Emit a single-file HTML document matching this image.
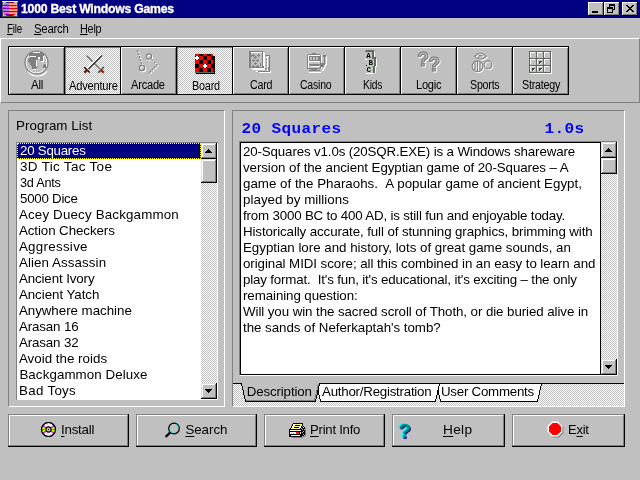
<!DOCTYPE html>
<html lang="en">
<head>
<meta charset="utf-8">
<title>1000 Best Windows Games</title>
<style>
html,body{margin:0;padding:0;}
html{background:#c0c0c0;}
body{width:640px;height:480px;overflow:hidden;background:#c0c0c0;position:relative;
 font-family:"Liberation Sans",sans-serif;font-size:13.33px;line-height:16px;color:#000;will-change:transform;}
*{box-sizing:border-box;}
.abs{position:absolute;}
.t{white-space:nowrap;line-height:16px;}
.dither,.tb.down{background:repeating-conic-gradient(#ffffff 0 25%,#c0c0c0 0 50%) 0 0/2px 2px;}
u{text-decoration:underline;text-decoration-thickness:1px;text-underline-offset:0.5px;text-decoration-skip-ink:none;}
/* title bar */
#title{left:0;top:0;width:640px;height:18px;background:#000080;}
.ttl{color:#fff;font-weight:bold;font-size:13px;-webkit-text-stroke:0.35px #fff;}
.tbtn{top:2px;width:16px;height:14px;background:#c0c0c0;
 box-shadow:inset -1px -1px 0 #000,inset 1px 1px 0 #fff,inset -2px -2px 0 #808080;}
/* menu */
.m{font-size:12px;}
.m u{padding-bottom:0;}
/* toolbar */
#tool{left:0;top:38px;width:640px;height:65px;border-top:1px solid #fff;border-left:1px solid #fff;
 border-right:1px solid #808080;border-bottom:1px solid #808080;}
.tb{top:46px;width:57px;height:49px;border:1px solid #000;background:#c0c0c0;
 box-shadow:inset 1px 1px 0 #fff,inset -1px -1px 0 #808080;}
.tb.down{box-shadow:inset 1px 1px 0 #808080;}
.tb .lbl{position:absolute;white-space:nowrap;font-size:12px;line-height:16px;}
.tb svg{position:absolute;}
/* panels */
.sunk{border-top:1px solid #808080;border-left:1px solid #808080;border-right:1px solid #fff;border-bottom:1px solid #fff;}
/* list */
#list{left:16px;top:142px;width:202px;height:258px;background:#fff;overflow:hidden;font-size:13.33px;border-left:1px solid #808080;border-top:1px solid #808080;padding-right:17px;}
#list div{height:16px;padding-left:2.6px;white-space:nowrap;}
#list div.sel{background:#000080;color:#fff;outline:1px dotted #ffff00;outline-offset:-1px;}
/* scrollbars */
.sb{width:16px;}
.sbtn{left:0;width:16px;height:16px;background:#c0c0c0;
 box-shadow:inset -1px -1px 0 #000,inset 1px 1px 0 #dfdfdf,inset -2px -2px 0 #808080,inset 2px 2px 0 #fff;}
/* memo */
#memo{left:239px;top:141px;width:379px;height:235px;border-top:1px solid #808080;border-left:1px solid #808080;border-right:1px solid #fff;border-bottom:1px solid #fff;}
#memoin{left:0;top:0;width:377px;height:233px;border:1px solid #000;background:#fff;}
#memotxt{left:243px;top:144px;width:358px;white-space:nowrap;}
#memotxt div{height:16px;}
.hdr{font-family:"Liberation Mono",monospace;font-weight:bold;font-size:16px;letter-spacing:0.4px;color:#0000ff;line-height:18px;white-space:nowrap;transform:scaleY(0.88);transform-origin:0 0;}
/* bottom buttons */
.bb{top:414px;height:33px;background:#c0c0c0;
 box-shadow:inset -1px -1px 0 #000,inset 1px 1px 0 #808080,inset -2px -2px 0 #808080,inset 2px 2px 0 #fff;}
.bb svg{position:absolute;left:0;top:0;}
.bb u{text-underline-offset:1.5px;}
</style>
</head>
<body>
<!-- TITLE BAR -->
<div id="title" class="abs">
 <svg class="abs" style="left:2px;top:1px" width="16" height="16" viewBox="0 0 16 16" shape-rendering="crispEdges">
  <rect width="16" height="16" fill="#c0c0c0"/>
  <path d="M0 0H16V1H0Z" fill="#f0f0f0"/><path d="M0 1H1V16H0ZM15 1H16V16H15ZM0 15H16V16H0Z" fill="#484838"/>
  <clipPath id="sph"><circle cx="7.9" cy="7.9" r="7.6"/></clipPath>
  <g clip-path="url(#sph)" shape-rendering="auto"><rect x="0" y="1" width="7" height="1" fill="#202080"/><rect x="0" y="2" width="7" height="1" fill="#f060f0"/><rect x="0" y="3" width="7" height="1" fill="#8080c0"/><rect x="0" y="4" width="7" height="1" fill="#8000c0"/><rect x="0" y="5" width="7" height="1" fill="#f060f0"/><rect x="0" y="6" width="7" height="1" fill="#8080c0"/><rect x="0" y="7" width="7" height="1" fill="#8000c0"/><rect x="0" y="8" width="7" height="1" fill="#f060f0"/><rect x="0" y="9" width="7" height="1" fill="#8080c0"/><rect x="0" y="10" width="7" height="1" fill="#8000c0"/><rect x="0" y="11" width="7" height="1" fill="#f060f0"/><rect x="0" y="12" width="7" height="1" fill="#8080c0"/><rect x="0" y="13" width="7" height="1" fill="#8000c0"/><rect x="0" y="14" width="7" height="1" fill="#202080"/><rect x="7" y="1" width="9" height="1" fill="#900000"/><rect x="7" y="2" width="9" height="1" fill="#ff8878"/><rect x="7" y="3" width="9" height="1" fill="#ffa090"/><rect x="7" y="4" width="9" height="1" fill="#e00000"/><rect x="7" y="5" width="9" height="1" fill="#ff8878"/><rect x="7" y="6" width="9" height="1" fill="#ffa090"/><rect x="7" y="7" width="9" height="1" fill="#e00000"/><rect x="7" y="8" width="9" height="1" fill="#ff8878"/><rect x="7" y="9" width="9" height="1" fill="#ffa090"/><rect x="7" y="10" width="9" height="1" fill="#e00000"/><rect x="7" y="11" width="9" height="1" fill="#ff8878"/><rect x="7" y="12" width="9" height="1" fill="#ffa090"/><rect x="7" y="13" width="9" height="1" fill="#e00000"/><rect x="7" y="14" width="9" height="1" fill="#900000"/></g>
 </svg>
 <!--TITLETXT-->
<span class="abs t ttl" style="left:20.5px;top:1px;letter-spacing:-0.25px;transform:scaleX(0.9409);transform-origin:0 0;">1000 Best Windows Games</span>
<!--/TITLETXT-->
 <div class="abs tbtn" style="left:588px"><div class="abs" style="left:4px;top:9px;width:6px;height:2px;background:#000"></div></div>
 <div class="abs tbtn" style="left:604px">
  <svg class="abs" style="left:0;top:0" width="16" height="14" shape-rendering="crispEdges">
   <path d="M5 2h6v2h-6zM5 4h1v1h-1zM10 4h1v4h-2v-1h1z" fill="#000"/>
   <path d="M3 5h6v2h-6zM3 7h1v4h-1zM8 7h1v4h-1zM3 10h6v1h-6z" fill="#000"/>
  </svg>
 </div>
 <div class="abs tbtn" style="left:622px">
  <svg class="abs" style="left:0;top:0" width="16" height="14" shape-rendering="crispEdges">
   <path d="M4 3h2v1h1v1h2v-1h1v-1h2v1h-1v1h-1v1h-1v1h1v1h1v1h1v1h-2v-1h-1v-1h-2v1h-1v1h-2v-1h1v-1h1v-1h1v-1h-1v-1h-1v-1h-1z" fill="#000"/>
  </svg>
 </div>
</div>
<!-- MENU -->
<!--MENU-->
<span class="abs t m" style="left:6.5px;top:21px;letter-spacing:-0.25px;transform:scaleX(0.8196);transform-origin:0 0;"><u>F</u>ile</span><span class="abs t m" style="left:34px;top:21px;letter-spacing:-0.25px;transform:scaleX(0.9474);transform-origin:0 0;"><u>S</u>earch</span><span class="abs t m" style="left:80px;top:21px;letter-spacing:-0.25px;transform:scaleX(0.9029);transform-origin:0 0;"><u>H</u>elp</span>
<!--/MENU-->
<!-- TOOLBAR -->
<div id="tool" class="abs"></div>
<!--TBBUTTONS-->
<div class="abs tb" style="left:8px"><svg width="57" height="49" viewBox="8 46 57 49" style="left:-1px;top:-1px"><g shape-rendering="auto" fill="none"><path d="M27.5 70.5A12 12 0 0 0 46.5 70.5" stroke="#fff" stroke-width="1.1" transform="translate(0.6,0.9)"/><circle cx="36.5" cy="62.5" r="10.5" stroke="#fff" stroke-width="1"/><circle cx="36.5" cy="62.5" r="11.5" stroke="#808080" stroke-width="1.25"/></g><g shape-rendering="crispEdges"><path d="M30 52h3v1h-3zM40 52h3v1h-3zM29 53h15v3h-15zM36 56h8v1h-8zM36 57h2v3h-2zM40 57h3v4h-3z" fill="#808080"/><path d="M30 57h6v1h-6zM29 58h7v1h-7zM28 59h8v3h-8zM29 62h7v1h-7zM30 63h6v2h-6zM31 65h5v1h-5zM32 66h4v3h-4z" fill="#808080"/><path d="M43 65h3v3h-3zM44 64h2v1h-2z" fill="#808080"/><path d="M33 52h7v1h-7zM30 56h6v1h-6zM36 60h1v6h-1zM33 69h3v1h-3zM43 56h1v6h-1zM41 61h2v1h-2zM38 57h2v2h-2z" fill="#fff"/><path d="M37 66h1v1h-1zM36 67h1v1h-1z" fill="#909000"/></g></svg><span class="lbl" style="left:21.9px;top:30px;letter-spacing:-0.25px;transform:scaleX(0.9696);transform-origin:0 0">All</span></div>
<div class="abs tb down" style="left:64px"><svg width="57" height="49" viewBox="64 46 57 49" style="left:-1px;top:-1px"><g shape-rendering="auto" stroke-linecap="butt"><line x1="87.4" y1="54.9" x2="100.9" y2="68.4" stroke="#e4e8e4" stroke-width="2"/><line x1="86.6" y1="55.5" x2="100.2" y2="69.1" stroke="#586858" stroke-width="1.2"/><line x1="101.1" y1="54.8" x2="87.5" y2="68.4" stroke="#f4f4f4" stroke-width="2.2"/><line x1="102.1" y1="55.4" x2="88.4" y2="69.1" stroke="#101010" stroke-width="1.2"/><line x1="84.2" y1="67.2" x2="89.8" y2="72.6" stroke="#101010" stroke-width="1.4"/><line x1="103.9" y1="67" x2="98.2" y2="72.7" stroke="#303830" stroke-width="1.4"/><line x1="87.7" y1="69.5" x2="84.3" y2="72.6" stroke="#802000" stroke-width="2.4"/><line x1="100.9" y1="70" x2="103.8" y2="72.6" stroke="#a82000" stroke-width="2.4"/></g></svg><span class="lbl" style="left:4px;top:31px;letter-spacing:-0.25px;transform:scaleX(0.9297);transform-origin:0 0">Adventure</span></div>
<div class="abs tb" style="left:120px"><svg width="57" height="49" viewBox="120 46 57 49" style="left:-1px;top:-1px"><g transform="translate(1,1)"><g shape-rendering="auto" fill="none" stroke="#ffffff"><line x1="137.3" y1="50.2" x2="142" y2="65" stroke-width="1.4" stroke-dasharray="2 1.2"/><circle cx="149" cy="56.5" r="2.6" stroke-width="1.3"/><circle cx="142" cy="68" r="2.6" stroke-width="1.3"/><polyline points="151.5,59.5 157,65 148,74" stroke-width="1.4" stroke-dasharray="2 1.3"/></g></g><g shape-rendering="auto" fill="none" stroke="#808080"><line x1="137.3" y1="50.2" x2="142" y2="65" stroke-width="1.4" stroke-dasharray="2 1.2"/><circle cx="149" cy="56.5" r="2.6" stroke-width="1.3"/><circle cx="142" cy="68" r="2.6" stroke-width="1.3"/><polyline points="151.5,59.5 157,65 148,74" stroke-width="1.4" stroke-dasharray="2 1.3"/></g></svg><span class="lbl" style="left:10px;top:30px;letter-spacing:-0.25px;transform:scaleX(0.9246);transform-origin:0 0">Arcade</span></div>
<div class="abs tb down" style="left:176px"><svg width="57" height="49" viewBox="176 46 57 49" style="left:-1px;top:-1px"><g shape-rendering="crispEdges"><rect x="196" y="56" width="19" height="18" fill="#000"/><rect x="195" y="72" width="19" height="1" fill="#606860"/><rect x="195" y="54" width="18" height="18" fill="#000"/><rect x="195" y="54" width="4" height="2" fill="#ff0000"/><rect x="203" y="54" width="4" height="2" fill="#ff0000"/><rect x="211" y="54" width="2" height="2" fill="#ff0000"/><rect x="199" y="56" width="4" height="4" fill="#ff0000"/><rect x="207" y="56" width="4" height="4" fill="#ff0000"/><rect x="195" y="60" width="4" height="4" fill="#ff0000"/><rect x="203" y="60" width="4" height="4" fill="#ff0000"/><rect x="211" y="60" width="2" height="4" fill="#ff0000"/><rect x="199" y="64" width="4" height="4" fill="#ff0000"/><rect x="207" y="64" width="4" height="4" fill="#ff0000"/><rect x="195" y="68" width="4" height="4" fill="#ff0000"/><rect x="203" y="68" width="4" height="4" fill="#ff0000"/><rect x="211" y="68" width="2" height="4" fill="#ff0000"/><path d="M196 56h2v1h1v2h-1v1h-2v-1h-1v-2h1z" fill="#fff"/><path d="M204 64h2v1h1v2h-1v1h-2v-1h-1v-2h1z" fill="#fff"/></g></svg><span class="lbl" style="left:14.9px;top:31px;letter-spacing:-0.25px;transform:scaleX(0.9062);transform-origin:0 0">Board</span></div>
<div class="abs tb" style="left:232px"><svg width="57" height="49" viewBox="232 46 57 49" style="left:-1px;top:-1px"><g shape-rendering="crispEdges"><path d="M263 53h2v17h-12v-1h11v-15h-1z" fill="#fff"/><path d="M266 55h2v17h-12v-1h11v-15h-1z" fill="#fff"/><path d="M262 52h2v17h-13v-1h12v-15h-1z" fill="#fff"/><path d="M268 56h2v15h1v2h-12v-1h10v-15h-1z" fill="#fff"/><path d="M265 55h5v1h-5zM269 56h1v15h-1zM258 71h12v1h-12z" fill="#808080"/><path d="M266 57h2v1h-2z" fill="#fff"/><path d="M266 59h1v1h-1zM266 62h1v1h-1zM266 65h1v1h-1zM266 68h1v1h-1zM268 67h1v3h-1z" fill="#808080"/><path d="M263 66h1v2h-1zM265 68h1v2h-1z" fill="#808080"/><rect x="249.5" y="51.5" width="13" height="16" fill="#c0c0c0" stroke="#808080" stroke-width="1"/><path d="M251 52h11v1h-11z" fill="#fff"/><path d="M250 52h1v15h-1z" fill="#808080"/></g><g fill="#808080" shape-rendering="crispEdges"><path d="M253 54h1v1h1v1h-1v1h-1v-1h-1v-1h1z"/><path d="M258 54h1v1h1v1h-1v1h-1v-1h-1v-1h1z"/><path d="M255 56h1v1h1v1h-1v1h-1v-1h-1v-1h1z"/><path d="M253 59h1v1h1v1h-1v1h-1v-1h-1v-1h1z"/><path d="M257 59h1v1h1v1h-1v1h-1v-1h-1v-1h1z"/><path d="M255 62h1v1h1v1h-1v1h-1v-1h-1v-1h1z"/><path d="M253 65h1v1h1v1h-1v1h-1v-1h-1v-1h1z"/><path d="M257 65h1v1h1v1h-1v1h-1v-1h-1v-1h1z"/><path d="M251 55h1v2h-1zM260 63h1v3h-1z"/></g></svg><span class="lbl" style="left:16.7px;top:30px;letter-spacing:-0.25px;transform:scaleX(0.8908);transform-origin:0 0">Card</span></div>
<div class="abs tb" style="left:288px"><svg width="57" height="49" viewBox="288 46 57 49" style="left:-1px;top:-1px"><g shape-rendering="crispEdges"><path d="M321 55h1v14h-1zM309 72h12v1h-12zM326 56h1v9h-1v2h-1v2h-1v2h-2v-1h1v-2h1v-2h1v-2h1z" fill="#fff"/><path d="M312 53h4v1h-4zM308 54h12v1h-12zM307 55h1v14h-1zM320 55h1v14h-1zM308 68h12v1h-12zM309 70h11v1h-11zM311 69h6v1h-6z" fill="#808080"/><path d="M308 55h12v1h-12zM308 56h1v12h-1z" fill="#fff"/><path d="M309 56h11v5h-11z" fill="#808080"/><path d="M310 57h2v3h-2zM313 57h2v3h-2zM316 57h2v3h-2z" fill="#c0c0c0"/><path d="M309 61h11v1h-11z" fill="#fff"/><path d="M309 64h11v1h-11zM310 65h9v1h-9z" fill="#808080"/><path d="M311 66h8v1h-8z" fill="#fff"/><path d="M323 55h3v2h-3zM324 57h1v8h-1zM321 63h3v4h-3z" fill="#808080"/></g></svg><span class="lbl" style="left:11.3px;top:30px;letter-spacing:-0.25px;transform:scaleX(0.8757);transform-origin:0 0">Casino</span></div>
<div class="abs tb" style="left:344px"><svg width="57" height="49" viewBox="344 46 57 49" style="left:-1px;top:-1px"><g shape-rendering="crispEdges"><path d="M374 52h1v7h-1zM376 59h1v8h-1zM375 66h1v7h-1zM366 73h8v1h-8zM365 59h2v1h-2z" fill="#fff"/><path d="M366 50h8v1h-8zM365 51h8v1h-8z" fill="#606860"/><path d="M372 51h2v8h-2z" fill="#606860"/><rect x="365" y="52" width="7" height="7" fill="#c0c8c0"/><path d="M373 57h3v1h-3zM372 58h3v1h-3zM374 58h2v8h-2z" fill="#606860"/><rect x="367" y="59" width="7" height="7" fill="#c0c8c0"/><path d="M373 66h2v7h-2z" fill="#606860"/><rect x="366" y="66" width="7" height="7" fill="#c0c8c0"/><path d="M366 65h1v1h-1z" fill="#000"/></g><g font-family="'Liberation Mono',monospace" font-weight="bold" font-size="7.5px" fill="#000"><text x="366.2" y="58">A</text><text x="368.4" y="65">B</text><text x="366.6" y="72">C</text></g></svg><span class="lbl" style="left:17.8px;top:30px;letter-spacing:-0.25px;transform:scaleX(0.8586);transform-origin:0 0">Kids</span></div>
<div class="abs tb" style="left:400px"><svg width="57" height="49" viewBox="400 46 57 49" style="left:-1px;top:-1px"><g font-family="'Liberation Sans',sans-serif" font-weight="bold" font-size="19.5px" stroke-width="1.1" stroke-linejoin="round"><text x="418.2" y="66.9" fill="none" stroke="#fff">?</text><text x="417.2" y="65.9" fill="#c0c0c0" stroke="#787878">?</text><text x="429.2" y="71.9" fill="none" stroke="#fff">?</text><text x="428.2" y="70.9" fill="#c0c0c0" stroke="#787878">?</text></g></svg><span class="lbl" style="left:15px;top:30px;letter-spacing:-0.25px;transform:scaleX(0.921);transform-origin:0 0">Logic</span></div>
<div class="abs tb" style="left:456px"><svg width="57" height="49" viewBox="456 46 57 49" style="left:-1px;top:-1px"><g transform="translate(1,1)"><g shape-rendering="auto" fill="none" stroke="#ffffff" stroke-width="1.1"><path d="M474.5 56.3Q480.3 50.3 486.3 56.3Q480.3 62.3 474.5 56.3Z"/><path d="M478.5 55.5h4M478.5 57h4" stroke-width="0.9"/><circle cx="477.5" cy="66.3" r="5.4"/><path d="M475 62v8.6M477.5 61v10.6M480 62v8.6" /><circle cx="488" cy="64.8" r="3.9"/></g></g><g shape-rendering="auto" fill="none" stroke="#808080" stroke-width="1.1"><path d="M474.5 56.3Q480.3 50.3 486.3 56.3Q480.3 62.3 474.5 56.3Z"/><path d="M478.5 55.5h4M478.5 57h4" stroke-width="0.9"/><circle cx="477.5" cy="66.3" r="5.4"/><path d="M475 62v8.6M477.5 61v10.6M480 62v8.6" /><circle cx="488" cy="64.8" r="3.9"/></g></svg><span class="lbl" style="left:12.7px;top:30px;letter-spacing:-0.25px;transform:scaleX(0.8884);transform-origin:0 0">Sports</span></div>
<div class="abs tb" style="left:512px"><svg width="57" height="49" viewBox="512 46 57 49" style="left:-1px;top:-1px"><g shape-rendering="crispEdges"><path d="M551 52h1v22h-22v-1h21z" fill="#fff"/><path d="M530 52h5v1h-4v4h-1z" fill="#fff"/><path d="M537 52h5v1h-4v4h-1z" fill="#fff"/><path d="M544 52h5v1h-4v4h-1z" fill="#fff"/><path d="M530 59h5v1h-4v4h-1z" fill="#fff"/><path d="M537 59h5v1h-4v4h-1z" fill="#fff"/><path d="M544 59h5v1h-4v4h-1z" fill="#fff"/><path d="M530 66h5v1h-4v4h-1z" fill="#fff"/><path d="M537 66h5v1h-4v4h-1z" fill="#fff"/><path d="M544 66h5v1h-4v4h-1z" fill="#fff"/><path d="M529 51h22v1h-22zM529 58h22v1h-22zM529 65h22v1h-22zM529 72h22v1h-22zM529 51h1v22h-1zM536 51h1v22h-1zM543 51h1v22h-1zM550 51h1v22h-1z" fill="#606860"/><path d="M539 61h3v1h-1v1h-1v1h-1z" fill="#404840"/><path d="M541 62h1v1h-1zM540 63h1v1h-1z" fill="#fff"/><path d="M532 68h3v1h-1v1h-1v1h-1z" fill="#404840"/><path d="M534 69h1v1h-1zM533 70h1v1h-1z" fill="#fff"/><path d="M539 68h3v1h-1v1h-1v1h-1z" fill="#404840"/><path d="M541 69h1v1h-1zM540 70h1v1h-1z" fill="#fff"/></g></svg><span class="lbl" style="left:8.9px;top:30px;letter-spacing:-0.25px;transform:scaleX(0.8943);transform-origin:0 0">Strategy</span></div>
<!--/TBBUTTONS-->
<!-- LEFT PANEL -->
<div class="abs sunk" style="left:8px;top:110px;width:217px;height:297px"></div>
<!--LEFTLBL-->
<span class="abs t " style="left:16px;top:118px;letter-spacing:0.059px;">Program List</span>
<!--/LEFTLBL-->
<div id="list" class="abs">
<!--LISTROWS-->
<div class="sel" style="padding-left:2.9px;letter-spacing:-0.25px"><span style="display:inline-block;transform:scaleX(0.9992);transform-origin:0 0">20 Squares</span></div>
<div style="padding-left:2.9px;letter-spacing:0.3px"><span style="display:inline-block;transform:scaleX(1.0117);transform-origin:0 0">3D Tic Tac Toe</span></div>
<div style="padding-left:2.9px;letter-spacing:-0.25px"><span style="display:inline-block;transform:scaleX(0.9504);transform-origin:0 0">3d Ants</span></div>
<div style="padding-left:2.9px;letter-spacing:-0.25px"><span style="display:inline-block;transform:scaleX(0.9982);transform-origin:0 0">5000 Dice</span></div>
<div style="padding-left:1.9px;letter-spacing:0.176px">Acey Duecy Backgammon</div>
<div style="padding-left:1.9px;letter-spacing:-0.077px">Action Checkers</div>
<div style="padding-left:1.9px;letter-spacing:0.298px">Aggressive</div>
<div style="padding-left:1.9px;letter-spacing:0.095px">Alien Assassin</div>
<div style="padding-left:1.9px;letter-spacing:-0.115px">Ancient Ivory</div>
<div style="padding-left:1.9px;letter-spacing:-0.041px">Ancient Yatch</div>
<div style="padding-left:1.9px;letter-spacing:-0.029px">Anywhere machine</div>
<div style="padding-left:1.9px;letter-spacing:-0.118px">Arasan 16</div>
<div style="padding-left:1.9px;letter-spacing:-0.118px">Arasan 32</div>
<div style="padding-left:1.9px;letter-spacing:0.017px">Avoid the roids</div>
<div style="padding-left:2.4px;letter-spacing:0.09px">Backgammon Deluxe</div>
<div style="padding-left:2.4px;letter-spacing:0.3px"><span style="display:inline-block;transform:scaleX(1.0016);transform-origin:0 0">Bad Toys</span></div>
<!--/LISTROWS-->
</div>
<div class="abs sb dither" style="left:201px;top:143px;height:256px">
 <div class="abs sbtn" style="top:0"><svg class="abs" style="left:0;top:0" width="16" height="16" shape-rendering="crispEdges"><path d="M7 6h1v1h1v1h1v1h1v1h-7v-1h1v-1h1v-1h1z" fill="#000"/></svg></div>
 <div class="abs sbtn" style="top:16px;height:24px"></div>
 <div class="abs sbtn" style="top:240px"><svg class="abs" style="left:0;top:0" width="16" height="16" shape-rendering="crispEdges"><path d="M4 6h7v1h-1v1h-1v1h-1v1h-1v-1h-1v-1h-1v-1h-1z" fill="#000"/></svg></div>
</div>
<!-- RIGHT PANEL -->
<div class="abs sunk" style="left:232px;top:110px;width:393px;height:297px"></div>
<!--HDR-->
<span class="abs hdr" style="left:241.5px;top:122px">20 Squares</span><span class="abs hdr" style="left:544.5px;top:122px">1.0s</span>
<!--/HDR-->
<div id="memo" class="abs"><div id="memoin" class="abs"></div></div>
<div id="memotxt" class="abs">
<!--MEMOLINES-->
<div style="letter-spacing:-0.143px">20-Squares v1.0s (20SQR.EXE) is a Windows shareware</div>
<div style="letter-spacing:-0.078px">version of the ancient Egyptian game of 20-Squares – A</div>
<div style="letter-spacing:0.005px">game of the Pharaohs. &nbsp;A popular game of ancient Egypt,</div>
<div style="letter-spacing:0.039px">played by millions</div>
<div style="letter-spacing:-0.181px">from 3000 BC to 400 AD, is still fun and enjoyable today.</div>
<div style="letter-spacing:-0.107px">Historically accurate, full of stunning graphics, brimming with</div>
<div style="letter-spacing:-0.016px">Egyptian lore and history, lots of great game sounds, an</div>
<div style="letter-spacing:-0.064px">original MIDI score; all this combined in an easy to learn and</div>
<div style="letter-spacing:-0.167px">play format. &nbsp;It's fun, it's educational, it's exciting – the only</div>
<div style="letter-spacing:-0.09px">remaining question:</div>
<div style="letter-spacing:-0.08px">Will you win the sacred scroll of Thoth, or die buried alive in</div>
<div style="letter-spacing:-0.038px">the sands of Neferkaptah's tomb?</div>
<!--/MEMOLINES-->
</div>
<div class="abs sb dither" style="left:601px;top:143px;height:231px;border-left:0">
 <div class="abs sbtn" style="top:-1px"><svg class="abs" style="left:0;top:0" width="16" height="16" shape-rendering="crispEdges"><path d="M7 6h1v1h1v1h1v1h1v1h-7v-1h1v-1h1v-1h1z" fill="#000"/></svg></div>
 <div class="abs sbtn" style="top:15px"></div>
 <div class="abs sbtn" style="top:216px"><svg class="abs" style="left:0;top:0" width="16" height="16" shape-rendering="crispEdges"><path d="M4 6h7v1h-1v1h-1v1h-1v1h-1v-1h-1v-1h-1v-1h-1z" fill="#000"/></svg></div>
</div>
<div class="abs" style="left:600px;top:142px;width:1px;height:233px;background:#000"></div>
<!-- TABSET -->
<div class="abs dither" style="left:233px;top:383px;width:391px;height:23px"></div>
<svg class="abs" style="left:232px;top:382px" width="394" height="26" viewBox="232 382 394 26" shape-rendering="crispEdges">
<!--TABSVG-->
<polygon points="436.5,384 440.5,401.5 537.5,401.5 541.5,384" fill="#fff"/><polyline points="436.5,383.5 440.5,401.5 537.5,401.5 541.5,383.5" fill="none" stroke="#000" stroke-width="1"/><polygon points="316.5,384 320.5,401.5 435.5,401.5 439.5,384" fill="#fff"/><polyline points="316.5,383.5 320.5,401.5 435.5,401.5 439.5,383.5" fill="none" stroke="#000" stroke-width="1"/><polygon points="241.5,384 245.5,401.5 315.5,401.5 319.5,384" fill="#c0c0c0"/><polyline points="245.5,400.5 314.5,400.5 318.5,383.5" fill="none" stroke="#808080" stroke-width="1"/><polyline points="241.5,383.5 245.5,401.5 315.5,401.5 319.5,383.5" fill="none" stroke="#000" stroke-width="1"/><rect x="233" y="383" width="9" height="1" fill="#000"/><rect x="319" y="383" width="305" height="1" fill="#000"/><rect x="242" y="383" width="77" height="1" fill="#c0c0c0"/>
<!--/TABSVG-->
</svg>
<!--TABTXT-->
<span class="abs t " style="left:246.75px;top:384px;letter-spacing:-0.15px;">Description</span><span class="abs t " style="left:322px;top:384px;letter-spacing:-0.246px;">Author/Registration</span><span class="abs t " style="left:440.5px;top:384px;letter-spacing:-0.25px;transform:scaleX(0.9988);transform-origin:0 0;">User Comments</span>
<!--/TABTXT-->
<!-- BOTTOM BUTTONS -->
<!--BOTTOM-->
<div class="abs bb" style="left:8px;width:121px"><svg width="121" height="33" viewBox="8 414 121 33"><g shape-rendering="auto"><circle cx="48.5" cy="429.5" r="7" fill="#fff" stroke="#000" stroke-width="1.2"/><path d="M48.5 429.5L43 424.9A7.2 7.2 0 0 0 43 434.1Z" fill="#ff00ff"/><path d="M48.5 429.5L41.8 426.6A7.2 7.2 0 0 0 41.8 432.4Z" fill="#ffff00"/><path d="M48.5 429.5L41.4 428.4A7.2 7.2 0 0 0 41.4 430.6Z" fill="#00e000"/><path d="M48.5 429.5L54 424.9A7.2 7.2 0 0 1 54 434.1Z" fill="#ff00ff"/><path d="M48.5 429.5L55.2 426.6A7.2 7.2 0 0 1 55.2 432.4Z" fill="#ffff00"/><path d="M48.5 429.5L55.6 428.4A7.2 7.2 0 0 1 55.6 430.6Z" fill="#00e000"/><path d="M44 425L53 434M53 425L44 434" stroke="#00ffff" stroke-width="1" fill="none"/><circle cx="48.5" cy="429.5" r="7" fill="none" stroke="#000" stroke-width="1.2"/><circle cx="48.5" cy="429.5" r="2.6" fill="#c0c0c0" stroke="#000" stroke-width="1.1"/><rect x="48" y="429" width="1" height="1" fill="#000"/><path d="M46.5 425.5l1 -1l1 1l1 -1M46.5 434.5l1 -1l1 1l1 -1" stroke="#c0c0c0" stroke-width="0.8" fill="none"/></g></svg><span class="abs t" style="left:53px;top:8px;letter-spacing:-0.226px;transform:scaleX(1);transform-origin:0 0"><u>I</u>nstall</span></div>
<div class="abs bb" style="left:136px;width:121px"><svg width="121" height="33" viewBox="136 414 121 33"><g shape-rendering="auto"><circle cx="174" cy="428.5" r="5.3" fill="none" stroke="#000" stroke-width="1.2"/><path d="M175.5 424.6A4 4 0 0 1 178 427.5" fill="none" stroke="#00ffff" stroke-width="1.3"/><path d="M170.2 430.5A4 4 0 0 0 172.8 432.6" fill="none" stroke="#00ffff" stroke-width="1.3"/><line x1="170" y1="432.6" x2="165.6" y2="437" stroke="#000" stroke-width="2.2"/></g></svg><span class="abs t" style="left:49.4px;top:8px;letter-spacing:-0.043px;transform:scaleX(1);transform-origin:0 0"><u>S</u>earch</span></div>
<div class="abs bb" style="left:264px;width:121px"><svg width="121" height="33" viewBox="264 414 121 33"><g shape-rendering="crispEdges"><path d="M292 437h11v1h-11zM303 436h2v1h-2zM305 428h1v8h-1z" fill="#808080"/><path d="M294 423h9v1h-9zM293 424h10v1h-10zM293 425h9v1h-9zM292 426h10v1h-10zM292 427h9v1h-9zM291 428h10v1h-10z" fill="#fff"/><path d="M293 423h10v1h-10zM302 424h1v2h-1zM301 426h1v2h-1zM300 428h1v1h-1zM292 424h1v2h-1zM291 426h1v2h-1zM290 428h1v1h-1z" fill="#000"/><path d="M295 425h5v1h-5zM294 427h5v1h-5z" fill="#000"/><path d="M296 424h1v1h-1zM300 424h1v1h-1zM294 426h1v1h-1zM299 426h1v1h-1zM292 428h1v1h-1zM296 428h1v1h-1z" fill="#ffff00"/><path d="M289 429h13v8h-13z" fill="#000"/><path d="M302 427h1v9h-1zM303 426h1v10h-1zM304 427h1v8h-1z" fill="#000"/><path d="M303 427h1v1h-1zM304 429h1v1h-1zM303 431h1v1h-1zM303 434h1v1h-1zM302 429h1v1h-1zM302 432h1v1h-1z" fill="#c0c0c0"/><path d="M290 430h11v1h-11zM291 435h9v1h-9z" fill="#fff"/><path d="M290 432h6v2h-6zM300 432h1v2h-1z" fill="#fff"/><path d="M296 432h3v1h-3z" fill="#ff0000"/><path d="M296 433h3v1h-3z" fill="#00c000"/><path d="M291 433h1v1h-1zM293 433h1v1h-1z" fill="#c0c0c0"/></g></svg><span class="abs t" style="left:46.01px;top:8px;letter-spacing:-0.25px;transform:scaleX(0.9864);transform-origin:0 0"><u>P</u>rint Info</span></div>
<div class="abs bb" style="left:392px;width:113px"><svg width="113" height="33" viewBox="392 414 113 33"><g font-family="'Liberation Sans',sans-serif" font-weight="bold" font-size="21px"><text x="399.2" y="438.6" fill="#000080">?</text><text x="397.6" y="437" fill="#00ffff">?</text><text x="398.4" y="437.8" fill="#008888">?</text></g></svg><span class="abs t" style="left:51.37px;top:8px;letter-spacing:0.3px;transform:scaleX(1.0261);transform-origin:0 0"><u>H</u>elp</span></div>
<div class="abs bb" style="left:512px;width:113px"><svg width="113" height="33" viewBox="512 414 113 33"><g shape-rendering="auto"><polygon points="553,422.6 559,422.6 563.4,427 563.4,433 559,437.4 553,437.4 548.6,433 548.6,427" fill="#808080"/><polygon points="552,421.6 558,421.6 562.4,426 562.4,432 558,436.4 552,436.4 547.6,432 547.6,426" fill="#fff"/><polygon points="552.6,423 557.4,423 561,426.6 561,431.4 557.4,435 552.6,435 549,431.4 549,426.6" fill="#ff0000"/></g></svg><span class="abs t" style="left:55.77px;top:8px;letter-spacing:-0.25px;transform:scaleX(0.9752);transform-origin:0 0">E<u>x</u>it</span></div>
<!--/BOTTOM-->
</body>
</html>
